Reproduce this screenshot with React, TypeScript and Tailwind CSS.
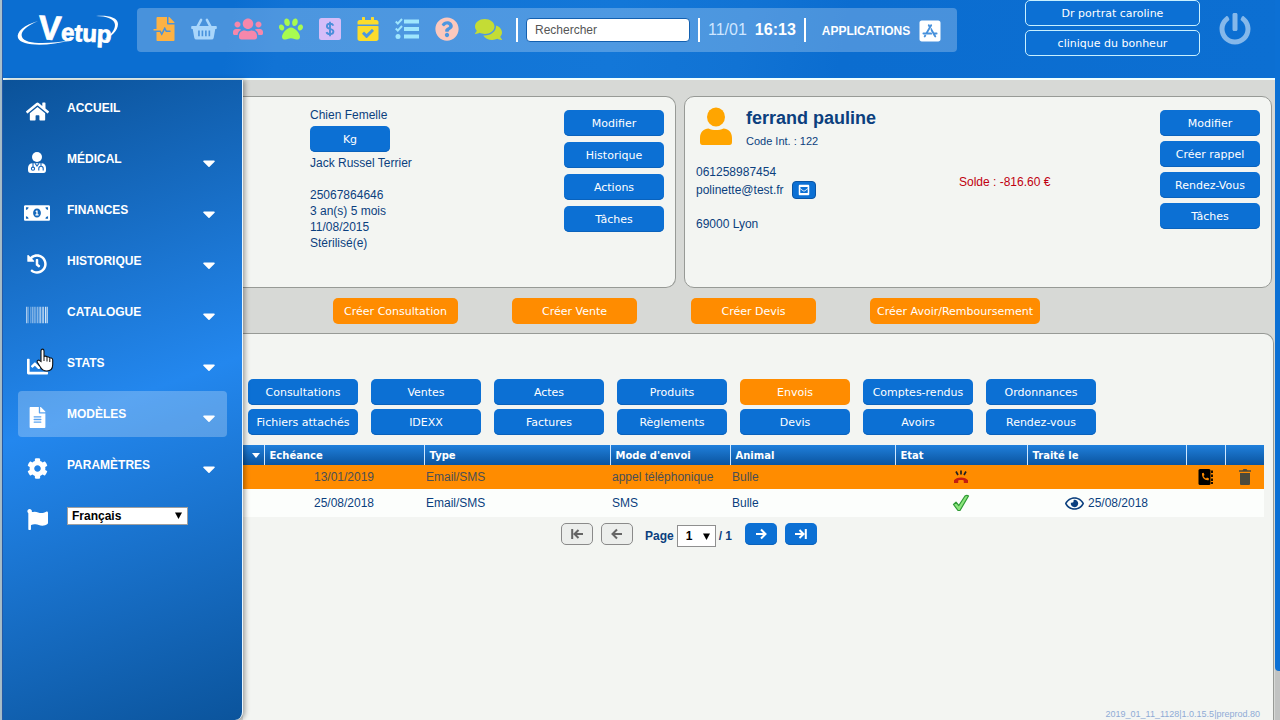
import React from "react";
import {
  FaAppStoreIos,
  FaBarcode,
  FaCalendarCheck,
  FaCaretDown,
  FaChartLine,
  FaCog,
  FaComments,
  FaEnvelopeSquare,
  FaFileAlt,
  FaFileMedicalAlt,
  FaFlag,
  FaHistory,
  FaHome,
  FaMoneyBillAlt,
  FaPaw,
  FaPowerOff,
  FaQuestionCircle,
  FaRegEye,
  FaUsers,
} from "react-icons/fa";

const BTN =
  "flex h-[26px] items-center justify-center whitespace-nowrap rounded-[5px] pt-[2px] font-['DejaVu_Sans',sans-serif] text-[11px] text-white";
const BLUE = "bg-[#0c70d4] shadow-[inset_0_-1px_0_#0a62bc]";
const ORANGE = "bg-[#ff8c00]";

function Logo() {
  return (
    <svg viewBox="0 0 104 42" className="h-[42px] w-[104px]" aria-label="Vetup" role="img">
      <path
        d="M22 13C8 17 0 24 2 30C5 38 30 39 56 32C34 36 9 37 6 29C4 24 10 18 22 13Z"
        fill="#fff"
      />
      <path
        d="M80 8C91 7 102 9 102 16C102 23 95 29 87 32C94 28 99 22 99 17C99 11 90 8 80 8Z"
        fill="#fff"
      />
      <text
        x="22"
        y="31"
        fill="#fff"
        stroke="#fff"
        strokeWidth="0.8"
        transform="rotate(3 22 31)"
        className="font-['Liberation_Sans',sans-serif] text-[24px] font-bold"
      >
        <tspan className="text-[34px]">V</tspan>etup
      </text>
    </svg>
  );
}

function Basket() {
  return (
    <svg viewBox="0 0 27 24" className="h-6 w-[26px]">
      <path d="M6.500 10L10.500 2.500M20.500 10L16.500 2.500" stroke="#a9d6fb" strokeWidth="2.600" strokeLinecap="round" />
      <path
        fillRule="evenodd"
        fill="#a9d6fb"
        d="M1 9h25a.8.8 0 0 1 .8.8v1.400a.8.8 0 0 1-.8.8h-.8l-1.600 9a2.400 2.400 0 0 1-2.300 2H5.700a2.400 2.400 0 0 1-2.300-2L1.800 12H1a.8.8 0 0 1-.8-.8V9.800A.8.8 0 0 1 1 9ZM7.400 13.500v6h1.700v-6ZM11 13.500v6h1.700v-6ZM14.600 13.500v6h1.700v-6ZM18.200 13.500v6h1.700v-6Z"
      />
    </svg>
  );
}

function DollarSquare() {
  return (
    <svg viewBox="0 0 22 22" className="size-[22px]">
      <rect width="22" height="22" rx="2.500" fill="#d5bdf8" />
      <path
        d="M14.400 7.600C13.800 6.300 12.500 5.800 11 5.800C9.200 5.800 7.900 6.700 7.900 8.200C7.900 11.800 14.400 9.900 14.400 13.600C14.400 15.200 13 16.200 11 16.200C9.300 16.200 8 15.500 7.500 14.200M11 3.800V18.200"
        fill="none"
        stroke="#4b8fdb"
        strokeWidth="1.900"
      />
    </svg>
  );
}

function TaskList() {
  return (
    <svg viewBox="0 0 24 22" className="h-[22px] w-6">
      <path
        d="M0.800 3.500L2.800 5.600L7 1M0.800 10.500L2.800 12.600L7 8"
        fill="none"
        stroke="#9fe6fd"
        strokeWidth="2"
      />
      <circle cx="3" cy="18.500" r="2.500" fill="#9fe6fd" />
      <path d="M9 3.500H24M9 11H24M9 18.500H24" stroke="#9fe6fd" strokeWidth="4" />
    </svg>
  );
}

function Doctor() {
  return (
    <svg viewBox="0 0 18 21" className="h-[21px] w-[18px]">
      <circle cx="9" cy="5" r="5" fill="#fff" />
      <path d="M0 18V16C0 13 2 11.200 4.500 11.200H13.500C16 11.200 18 13 18 16V18Q18 21 15.500 21H2.500Q0 21 0 18Z" fill="#fff" />
      <g fill="none" stroke="#1566bd" strokeWidth="1.100">
        <path d="M5 11V15M13 11V14M10.800 18.500V16.500C10.800 13.400 15.200 13.400 15.200 16.500V18.500" />
        <circle cx="5" cy="16.700" r="1.600" />
        <path d="M7 11.200L9 14L11 11.200" />
      </g>
    </svg>
  );
}

const tools = [
  { label: "Dossier médical", icon: <FaFileMedicalAlt className="h-6 w-[22px] text-[#fdb244]" /> },
  { label: "Panier", icon: <Basket /> },
  { label: "Clients", icon: <FaUsers className="h-[26px] w-[30px] text-[#f687ab]" /> },
  { label: "Animaux", icon: <FaPaw className="size-6 text-[#a8fb50]" /> },
  { label: "Caisse", icon: <DollarSquare /> },
  { label: "Agenda", icon: <FaCalendarCheck className="h-6 w-[22px] text-[#fbdc2c]" /> },
  { label: "Tâches", icon: <TaskList /> },
  { label: "Aide", icon: <FaQuestionCircle className="size-6 text-[#fbc8bd]" /> },
  { label: "Messages", icon: <FaComments className="size-[27px] text-[#c4dc35]" /> },
];

function Divider() {
  return <span className="h-6 w-[2px] bg-white" />;
}

function Header() {
  return (
    <header className="flex h-20 items-start border-b-2 border-[#f0ffff] bg-[linear-gradient(100deg,#0b6ed1_0%,#0b6ed1_18%,#1173d5_22%,#1377d8_48%,#1173d4_58%,#0b6dd0_66%,#0c6fd2_100%)]">
      <a href="#" className="ml-[13px] mt-2 shrink-0">
        <Logo />
      </a>
      <div className="ml-[17px] mt-2 flex h-11 shrink-0 items-center rounded bg-white/25 pl-4 pr-[15px]">
        <nav className="flex items-center gap-4 pb-[2px]">
          {tools.map((t) => (
            <button key={t.label} type="button" aria-label={t.label}>
              {t.icon}
            </button>
          ))}
        </nav>
        <div className="ml-[14px] flex items-center">
          <Divider />
          <input
            type="search"
            aria-label="Rechercher"
            placeholder="Rechercher"
            className="ml-2 h-6 w-[164px] rounded border border-[#1360b0] bg-white px-2 text-[12px] text-black placeholder:text-[#555]"
          />
          <span className="ml-2 flex">
            <Divider />
          </span>
        </div>
        <span className="ml-2 text-[16px] text-[#cfe6ff]">11/01</span>
        <span className="mx-2 text-[16px] font-bold text-white">16:13</span>
        <Divider />
        <a href="#" className="ml-4 flex items-center gap-2 pt-[2px] text-[12px] font-bold text-white">
          APPLICATIONS
          <FaAppStoreIos className="size-6" />
        </a>
      </div>
      <div className="ml-auto flex w-[175px] flex-col gap-1">
        {["Dr portrat caroline", "clinique du bonheur"].map((t) => (
          <button key={t} type="button" className={`${BTN} border border-[#c8f0ff] bg-[#0c70d4]`}>
            {t}
          </button>
        ))}
      </div>
      <button type="button" aria-label="Déconnexion" className="ml-[19px] mr-6 mt-[13px]">
        <FaPowerOff className="size-8 text-[#85b8ea]" />
      </button>
    </header>
  );
}

const menu = [
  { label: "ACCUEIL", icon: <FaHome className="size-[23px]" />, sub: false },
  { label: "MÉDICAL", icon: <Doctor />, sub: true },
  { label: "FINANCES", icon: <FaMoneyBillAlt className="size-[26px]" />, sub: true },
  { label: "HISTORIQUE", icon: <FaHistory className="size-5" />, sub: true },
  { label: "CATALOGUE", icon: <FaBarcode className="size-[22px] opacity-80" />, sub: true },
  { label: "STATS", icon: <FaChartLine className="size-[21px]" />, sub: true },
  { label: "MODÈLES", icon: <FaFileAlt className="size-[21px]" />, sub: true, active: true },
  { label: "PARAMÈTRES", icon: <FaCog className="size-[21px]" />, sub: true },
];

function HandCursor() {
  return (
    <svg viewBox="0 0 18 24" className="absolute left-[18px] top-2 h-6 w-[18px]">
      <path
        d="M5 13.500V3C5 .5 8 .5 8 3V9C8 7.800 11 7.800 11 9.500C11 8.500 13.800 8.700 13.800 10.500C14 9.500 16.700 9.800 16.700 12V16.500C16.700 20.500 14.500 23 10.800 23C7.500 23 5.500 21.500 4 18.500L1.300 14.200C.5 12.500 2.600 11.600 3.600 12.600Z"
        fill="#fff"
        stroke="#111"
        strokeWidth="1.100"
      />
      <path d="M8 9V13M11 9.500V13.500M13.800 10.500V14" stroke="#111" strokeWidth="1" />
    </svg>
  );
}

function SelectArrow({ className }: { className: string }) {
  return (
    <svg viewBox="0 0 8 8" className={`pointer-events-none absolute size-[7px] ${className}`}>
      <path d="M0 0.500H8L4 8Z" fill="#000" />
    </svg>
  );
}

function Sidebar() {
  return (
    <aside className="z-10 flex w-60 shrink-0 flex-col rounded-br-lg border-r border-[#e8f6ff] bg-[linear-gradient(160deg,#0b5299_0%,#2387ee_50%,#0b549c_100%)] px-[15px] pt-[5px] shadow-[2px_0_5px_rgba(0,0,0,0.35)]">
      <nav className="flex flex-col gap-[5px]">
        {menu.map((m) => (
          <button
            key={m.label}
            type="button"
            className={`relative flex h-[46px] w-[209px] items-center rounded text-[12px] font-bold text-white ${
              m.active ? "bg-white/25" : ""
            }`}
          >
            <span className="mr-[11px] flex w-[38px] justify-center pt-[6px]">{m.icon}</span>
            {m.label}
            {m.sub && <FaCaretDown className="ml-auto mr-[8px] mt-[7px] size-5" />}
            {m.label === "STATS" && <HandCursor />}
          </button>
        ))}
      </nav>
      <div className="mt-[5px] flex h-[46px] items-center text-white">
        <span className="mr-[11px] flex w-[38px] justify-center pt-[6px]">
          <FaFlag className="size-[21px]" />
        </span>
        <span className="relative">
          <select
            aria-label="Langue"
            className="block h-[18px] w-[121px] appearance-none border border-[#a0a0a0] bg-white pl-1 text-[12px] leading-4 font-bold text-black"
          >
            <option>Français</option>
          </select>
          <SelectArrow className="right-[6px] top-[5px]" />
        </span>
      </div>
    </aside>
  );
}

function PatientCard() {
  return (
    <section className="flex justify-between rounded-r-[10px] border border-l-0 border-[#979a96] bg-[#f3f5f2] pl-[67px] pr-[11px]">
      <div className="pt-[10px] leading-4">
        <p>Chien Femelle</p>
        <button type="button" className={`${BTN} ${BLUE} my-[3px] w-20`}>
          Kg
        </button>
        <p>Jack Russel Terrier</p>
        <p className="mt-4">25067864646</p>
        <p>3 an(s) 5 mois</p>
        <p>11/08/2015</p>
        <p>Stérilisé(e)</p>
      </div>
      <div className="flex w-[100px] flex-col gap-[6px] pt-[13px]">
        {["Modifier", "Historique", "Actions", "Tâches"].map((t) => (
          <button key={t} type="button" className={`${BTN} ${BLUE}`}>
            {t}
          </button>
        ))}
      </div>
    </section>
  );
}

function ClientCard() {
  return (
    <section className="flex rounded-[10px] border border-[#979a96] bg-[#f3f5f2] pl-[11px] pr-[11px]">
      <div className="w-[263px] pt-[10px] leading-4">
        <div className="flex gap-[14px] pl-1">
          <svg viewBox="0 0 32 38" className="h-[38px] w-8">
            <ellipse cx="16" cy="10" rx="9" ry="9.500" fill="#ffa500" />
            <path
              d="M0 35V31C0 25 4 21.500 8.500 21.500C13 23.500 19 23.500 23.500 21.500C28 21.500 32 25 32 31V35Q32 38 29.500 38H2.500Q0 38 0 35Z"
              fill="#ffa500"
            />
          </svg>
          <div>
            <h1 className="text-[18px] leading-[22px] font-bold">ferrand pauline</h1>
            <p className="mt-1 text-[11px]">Code Int. : 122</p>
          </div>
        </div>
        <p className="mt-[15px]">061258987454</p>
        <p className="flex h-5 items-center gap-2">
          polinette@test.fr
          <button
            type="button"
            aria-label="Envoyer un email"
            className="flex h-[18px] w-6 items-center justify-center rounded border border-[#0a55a5] bg-[#0c70d4] text-white"
          >
            <FaEnvelopeSquare className="size-3" />
          </button>
        </p>
        <p className="mt-4">69000 Lyon</p>
      </div>
      <p className="pt-[77px] leading-4 text-[#c00010]">Solde : -816.60 €</p>
      <div className="ml-auto flex w-[100px] flex-col gap-[5px] pt-[13px]">
        {["Modifier", "Créer rappel", "Rendez-Vous", "Tâches"].map((t) => (
          <button key={t} type="button" className={`${BTN} ${BLUE}`}>
            {t}
          </button>
        ))}
      </div>
    </section>
  );
}

const tabs = [
  "Consultations",
  "Ventes",
  "Actes",
  "Produits",
  "Envois",
  "Comptes-rendus",
  "Ordonnances",
  "Fichiers attachés",
  "IDEXX",
  "Factures",
  "Règlements",
  "Devis",
  "Avoirs",
  "Rendez-vous",
];

function MissedCall() {
  return (
    <svg viewBox="0 0 16 14" className="mx-auto h-[14px] w-4">
      <path d="M3 1.500L5 5M8 0.500V4.500M13 1.500L11 5" stroke="#222" strokeWidth="1.700" />
      <path
        d="M1 13V10.300C3 6.400 13 6.400 15 10.300V13H10.800V10.500C9.500 9.900 6.500 9.900 5.200 10.500V13Z"
        fill="#c41e10"
      />
    </svg>
  );
}

function CheckMark() {
  return (
    <svg viewBox="0 0 18 18" className="mx-auto size-[18px]">
      <path
        d="M1.500 10.500L4 8.200L6.800 11.500L13 2Q15 .6 16.500 2L8 16.500H6Z"
        fill="#8be57c"
        stroke="#2f9a35"
        strokeWidth="1.200"
        strokeLinejoin="round"
      />
    </svg>
  );
}

function PhoneBook() {
  return (
    <svg viewBox="0 0 16 16" className="size-4">
      <rect x="0.500" y="0" width="12" height="16" rx="1.500" fill="#000" />
      <path d="M14 1.500V4M14 5.500V8M14 9.500V12M14 13V15" stroke="#000" strokeWidth="1.800" />
      <path
        d="M4 4.300L5.600 3.800L6.500 6L5.500 7C6 8.200 6.800 9 8 9.600L9 8.600L11 9.500L10.600 11.200C6.500 11.700 3.700 8.500 4 4.300Z"
        fill="#ff8c00"
      />
    </svg>
  );
}

function Trash() {
  return (
    <svg viewBox="0 0 12 16" className="h-4 w-3">
      <path d="M0 1.200H3.500L4.500 0H7.500L8.500 1.200H12V2.800H0ZM1 4H11V15Q11 16 10 16H2Q1 16 1 15Z" fill="#4c4a3c" />
    </svg>
  );
}

const TH = "border-r border-[#cfe8ff] pl-[5px] text-left";

function SendTable() {
  return (
    <table className="mt-[10px] w-full table-fixed border-collapse text-[12px]">
      <thead>
        <tr className="h-5 bg-linear-to-b from-[#2080dc] to-[#0a549f] font-['DejaVu_Sans',sans-serif] text-[10px] font-bold text-white">
          <th className={`w-[21px] ${TH}`} aria-label="Trier">
            <svg viewBox="0 0 8 5" className="ml-1 h-[5px] w-2">
              <path d="M0 0H8L4 5Z" fill="#fff" />
            </svg>
          </th>
          <th className={`w-[160px] ${TH}`}>Echéance</th>
          <th className={`w-[186px] ${TH}`}>Type</th>
          <th className={`w-[120px] ${TH}`}>Mode d'envoi</th>
          <th className={`w-[165px] ${TH}`}>Animal</th>
          <th className={`w-[132px] ${TH}`}>Etat</th>
          <th className={`w-[159px] ${TH}`}>Traité le</th>
          <th className={`w-[39px] ${TH}`} aria-label="Répertoire" />
          <th className="w-[39px]" aria-label="Supprimer" />
        </tr>
      </thead>
      <tbody>
        <tr className="h-6 bg-[#ff8c00] text-[#4a4f55]">
          <td />
          <td className="text-center">13/01/2019</td>
          <td className="pl-[2px]">Email/SMS</td>
          <td className="whitespace-nowrap pl-[2px]">appel téléphonique</td>
          <td className="pl-[2px]">Bulle</td>
          <td>
            <MissedCall />
          </td>
          <td />
          <td>
            <button type="button" aria-label="Appeler" className="mx-auto block">
              <PhoneBook />
            </button>
          </td>
          <td>
            <button type="button" aria-label="Supprimer" className="mx-auto block">
              <Trash />
            </button>
          </td>
        </tr>
        <tr className="h-7 bg-[#fcfefc]">
          <td />
          <td className="text-center">25/08/2018</td>
          <td className="pl-[2px]">Email/SMS</td>
          <td className="pl-[2px]">SMS</td>
          <td className="pl-[2px]">Bulle</td>
          <td>
            <CheckMark />
          </td>
          <td>
            <span className="flex items-center justify-center gap-1">
              <FaRegEye className="size-[19px]" />
              25/08/2018
            </span>
          </td>
          <td />
          <td />
        </tr>
      </tbody>
    </table>
  );
}

function Arrow({ flip, bar }: { flip?: boolean; bar?: boolean }) {
  return (
    <svg viewBox="0 0 12 12" className={`size-3 ${flip ? "-scale-x-100" : ""}`}>
      <path
        d={bar ? "M0 6H8M4.500 2L8.500 6L4.500 10M10.800 1V11" : "M1 6H10.500M6 1.500L10.500 6L6 10.500"}
        fill="none"
        stroke="currentColor"
        strokeWidth="2"
      />
    </svg>
  );
}

const PAGE_BTN = "flex h-[22px] w-8 items-center justify-center rounded-[5px]";
const OFF = "border border-[#8a8a8a] bg-[#eceeec] text-[#666]";

function Pagination() {
  return (
    <div className="mt-[6px] flex items-start gap-2 pl-[318px] text-[12px] font-bold">
      <button type="button" aria-label="Première page" className={`${PAGE_BTN} ${OFF}`}>
        <Arrow flip bar />
      </button>
      <button type="button" aria-label="Page précédente" className={`${PAGE_BTN} ${OFF}`}>
        <Arrow flip />
      </button>
      <label className="ml-1 mr-[5px] mt-[2px] flex h-[22px] items-center gap-[3px]">
        Page
        <span className="relative">
          <select className="block h-[22px] w-[39px] appearance-none border border-[#8f8f8f] bg-white pl-2 text-[12px] font-bold text-black">
            <option>1</option>
          </select>
          <SelectArrow className="right-[6px] top-2" />
        </span>
        / 1
      </label>
      <button type="button" aria-label="Page suivante" className={`${PAGE_BTN} ${BLUE} text-white`}>
        <Arrow />
      </button>
      <button type="button" aria-label="Dernière page" className={`${PAGE_BTN} ${BLUE} text-white`}>
        <Arrow bar />
      </button>
    </div>
  );
}

export default function App() {
  return (
    <div className="flex min-h-screen font-['Liberation_Sans',Arial,sans-serif] text-[12px] text-[#0b3f7e]">
      <div className="w-[3px] shrink-0 border-r border-[#2a5fae] bg-[#a9c0cc]" />
      <div className="flex min-w-0 flex-1 flex-col">
        <Header />
        <div className="flex flex-1 bg-[#d7d9d6]">
          <Sidebar />
          <main className="flex min-w-0 flex-1 flex-col pt-4">
            <div className="grid min-h-48 grid-cols-[433fr_588fr] gap-2 pr-[3px]">
              <PatientCard />
              <ClientCard />
            </div>
            <div className="mb-[9px] mt-[10px] flex gap-[54px] pl-[90px]">
              {["Créer Consultation", "Créer Vente", "Créer Devis", "Créer Avoir/Remboursement"].map((t) => (
                <button key={t} type="button" className={`${BTN} ${ORANGE} min-w-[125px] px-[7px]`}>
                  {t}
                </button>
              ))}
            </div>
            <section className="mr-px flex flex-1 flex-col rounded-tr-[10px] border-r border-t border-[#979a96] bg-[#f3f5f2] pr-[9px] pt-[45px]">
              <div className="grid grid-cols-[repeat(7,110px)] gap-x-[13px] gap-y-1 pl-[5px]">
                {tabs.map((t) => (
                  <button key={t} type="button" className={`${BTN} ${t === "Envois" ? ORANGE : BLUE}`}>
                    {t}
                  </button>
                ))}
              </div>
              <SendTable />
              <Pagination />
              <footer className="mt-auto pr-1 text-right text-[9px] leading-3 text-[#8fabd6]">
                2019_01_11_1128|1.0.15.5|preprod.80
              </footer>
            </section>
          </main>
        </div>
      </div>
      <div className="flex w-[5px] shrink-0 flex-col bg-[#c1c3c2]">
        <div className="mb-[49px] flex-1 rounded-bl bg-[#0c70d4]" />
      </div>
    </div>
  );
}
